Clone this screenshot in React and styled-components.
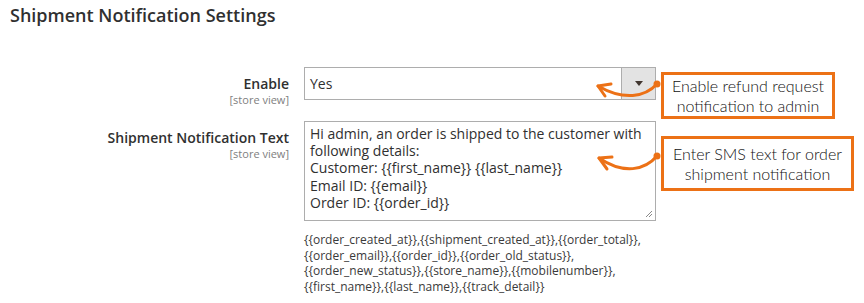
import React from 'react';
import styled, { createGlobalStyle } from 'styled-components';

const GlobalStyle = createGlobalStyle`
  body {
    margin: 0;
    background: #ffffff;
    font-family: "Open Sans", "Noto Sans", sans-serif;
    color: #303030;
  }
`;

const tokens = [
  '{{order_created_at}},{{shipment_created_at}},{{order_total}},',
  '{{order_email}},{{order_id}},{{order_old_status}},',
  '{{order_new_status}},{{store_name}},{{mobilenumber}},',
  '{{first_name}},{{last_name}},{{track_detail}}',
];

const smsText = [
  'Hi admin, an order is shipped to the customer with',
  'following details:',
  'Customer: {{first_name}} {{last_name}}',
  'Email ID: {{email}}',
  'Order ID: {{order_id}}',
];

function Arrow({ from, to, c1, c2, barbs }) {
  return (
    <g stroke="#ec7116" strokeWidth="3" fill="none" strokeLinecap="round" strokeLinejoin="round">
      <path d={`M${from[0]} ${from[1]} C ${c1[0]} ${c1[1]}, ${c2[0]} ${c2[1]}, ${to[0]} ${to[1]}`} />
      <polyline points={`${barbs[0][0]},${barbs[0][1]} ${to[0]},${to[1]} ${barbs[1][0]},${barbs[1][1]}`} />
      <circle cx={from[0]} cy={from[1]} r="3.5" fill="#ec7116" stroke="none" />
    </g>
  );
}

export default function App() {
  return (
    <Page>
      <GlobalStyle />
      <Title>Shipment Notification Settings</Title>
      <Form>
        <Row>
          <Label>
            <span>Enable</span>
            <Scope>[store view]</Scope>
          </Label>
          <Control>
            <Select>
              <SelectValue>Yes</SelectValue>
              <SelectButton>
                <Caret />
              </SelectButton>
            </Select>
          </Control>
        </Row>
        <Row $gap={15}>
          <Label>
            <span>Shipment Notification Text</span>
            <Scope>[store view]</Scope>
          </Label>
          <Control>
            <TextArea>
              {smsText.map((line) => (
                <div key={line}>{line}</div>
              ))}
              <Grip viewBox="0 0 8 8">
                <path d="M1 7 L7 1 M4 7 L7 4" stroke="#8a8a8a" strokeWidth="1" />
              </Grip>
            </TextArea>
            <Note>
              {tokens.map((line) => (
                <div key={line}>{line}</div>
              ))}
            </Note>
          </Control>
        </Row>
      </Form>

      <Callout $top={72} $width={174} $height={47}>
        Enable refund request
        <br />
        notification to admin
      </Callout>
      <Callout $top={136} $width={193} $height={55}>
        Enter SMS text for order
        <br />
        shipment notification
      </Callout>
      <Overlay width="864" height="303" viewBox="0 0 864 303">
        <Arrow from={[657, 84]} c1={[645, 97]} c2={[624, 101]} to={[598, 86]} barbs={[[611, 84], [605, 96]]} />
        <Arrow from={[657, 156]} c1={[645, 170]} c2={[624, 175]} to={[599, 158]} barbs={[[612, 157], [607, 169]]} />
      </Overlay>
    </Page>
  );
}

const Page = styled.div`
  position: relative;
  width: 864px;
  height: 303px;
  overflow: hidden;
`;

const Title = styled.h2`
  margin: 0;
  padding: 3px 0 0 10px;
  font-size: 18px;
  line-height: 24px;
  font-weight: 600;
  color: #303030;
`;

const Form = styled.div`
  display: flex;
  flex-direction: column;
  padding-top: 40px;
`;

const Row = styled.div`
  display: flex;
  align-items: flex-start;
  margin-top: ${(p) => (p.$gap ? `${p.$gap}px` : '0')};
`;

const Label = styled.label`
  width: 289px;
  padding: 7px 15px 0 0;
  display: flex;
  flex-direction: column;
  align-items: flex-end;
  font-size: 14px;
  line-height: 20px;
  font-weight: 600;
  color: #303030;
`;

const Scope = styled.span`
  font-size: 11px;
  line-height: 12px;
  font-weight: 400;
  color: #808080;
`;

const Control = styled.div`
  width: 352px;
  display: flex;
  flex-direction: column;
`;

const Select = styled.div`
  display: flex;
  height: 33px;
  box-sizing: border-box;
  border: 1px solid #adadad;
`;

const SelectValue = styled.div`
  flex: 1;
  padding-left: 5px;
  font-size: 14px;
  line-height: 31px;
`;

const SelectButton = styled.div`
  width: 33px;
  background: #e3e3e3;
  border-left: 1px solid #adadad;
  display: flex;
  align-items: center;
  justify-content: center;
`;

const Caret = styled.span`
  width: 0;
  height: 0;
  border-left: 4px solid transparent;
  border-right: 4px solid transparent;
  border-top: 5px solid #41362f;
`;

const TextArea = styled.div`
  position: relative;
  height: 100px;
  box-sizing: border-box;
  border: 1px solid #adadad;
  padding: 3px 5px;
  font-size: 14px;
  line-height: 17.2px;
  color: #303030;
`;

const Grip = styled.svg`
  position: absolute;
  right: 2px;
  bottom: 2px;
  width: 8px;
  height: 8px;
`;

const Note = styled.div`
  margin-top: 11px;
  font-size: 12px;
  line-height: 15.7px;
  color: #3a3a3a;
  white-space: nowrap;
`;

const Callout = styled.div`
  position: absolute;
  left: 661px;
  top: ${(p) => p.$top}px;
  width: ${(p) => p.$width}px;
  height: ${(p) => p.$height}px;
  box-sizing: border-box;
  border: 3px solid #ec7116;
  background: #ffffff;
  display: flex;
  align-items: center;
  justify-content: center;
  text-align: center;
  font-family: Lato, "Noto Sans", sans-serif;
  font-size: 16px;
  font-weight: 300;
  line-height: 20px;
  color: #111111;
`;

const Overlay = styled.svg`
  position: absolute;
  left: 0;
  top: 0;
  pointer-events: none;
`;
